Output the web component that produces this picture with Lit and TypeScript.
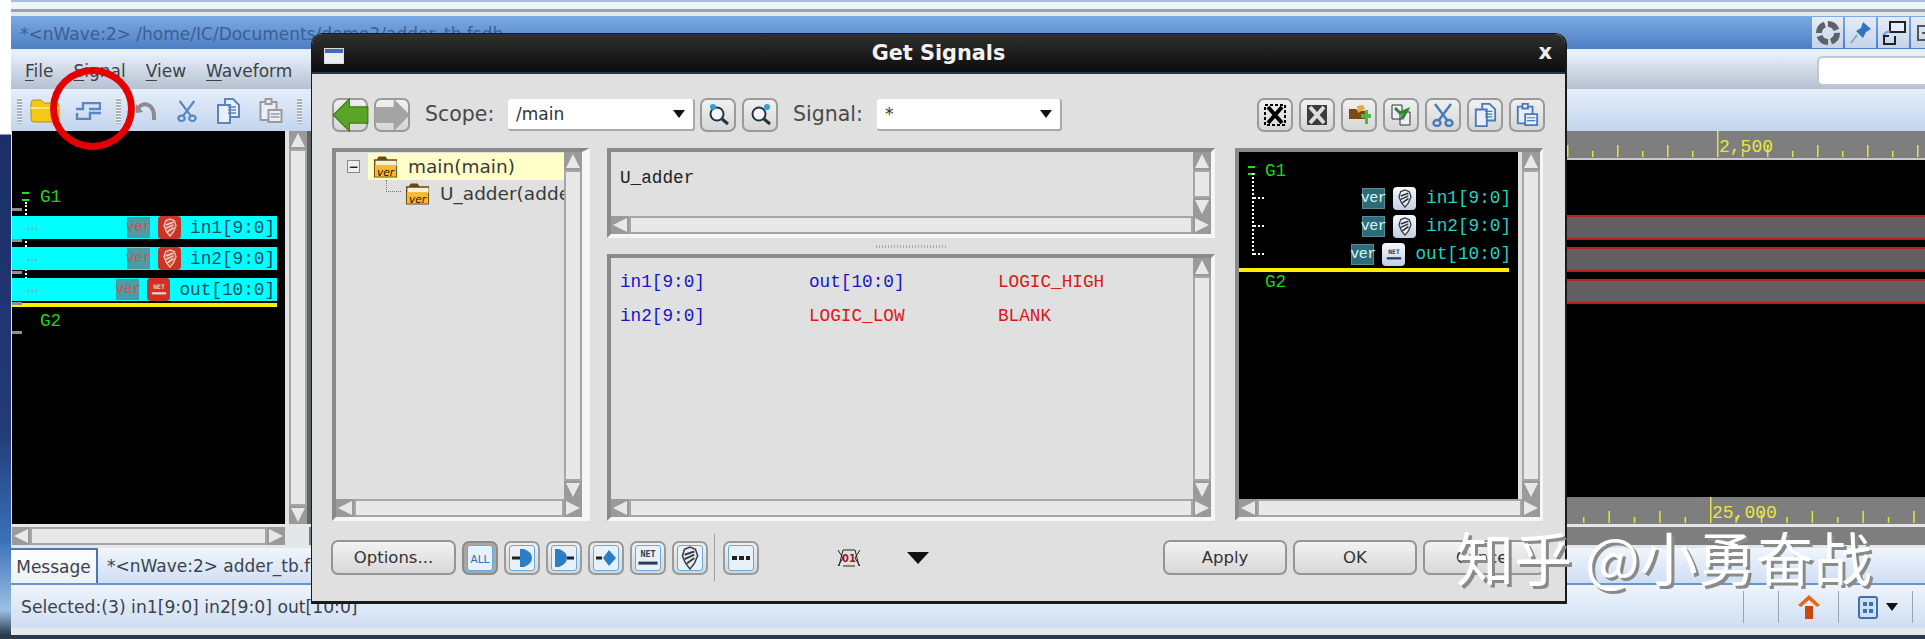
import { LitElement, html, css, svg } from "lit";
import { customElement } from "lit/decorators.js";

const vArrow = (up: boolean) => html`<svg class="arr" viewBox="0 0 18 18">
  <rect width="18" height="18" fill="#9a9a9a"/>
  <path d=${up ? "M9 2 16 16H2z" : "M9 16 16 2H2z"} fill="#e8e8e8"/></svg>`;
const hArrow = (left: boolean) => html`<svg class="arr" viewBox="0 0 18 18">
  <rect width="18" height="18" fill="#9a9a9a"/>
  <path d=${left ? "M2 9 16 2V16z" : "M16 9 2 2V16z"} fill="#e8e8e8"/></svg>`;
const vscroll = () => html`<div class="vscroll">${vArrow(true)}<div class="thumb"></div>${vArrow(false)}</div>`;
const hscroll = () => html`<div class="hscroll">${hArrow(true)}<div class="thumb"></div>${hArrow(false)}</div>`;

const folder = () => html`<svg class="folder" viewBox="0 0 26 24">
  <path d="M1 4h3l2-3h7l2 3h10v19H1z" fill="#6a4a10"/>
  <path d="M2.500 5.500h22V11h-22z" fill="#f6f0dc"/>
  <path d="M2 10h22v12H2z" fill="#f8b830"/>
  <text x="13" y="21" font-size="11" font-style="italic" text-anchor="middle" font-family="DejaVu Sans" fill="#1c1200">ver</text></svg>`;

const hatch = (c: string, o: string) => html`<svg viewBox="0 0 18 22" class="hatch">
  <path d="M4 3 9 1l5 2 2 6-3 7-4 5-4-5-3-7z" fill="${c}" stroke="${o}" stroke-width="1.400"/>
  <path d="M4 8l9-3M4 12l9-4M6 16l7-5" stroke="${o}" stroke-width="1.800" fill="none"/></svg>`;

const netIcon = (c: string) => html`<svg viewBox="0 0 20 20" class="hatch">
  <text x="10" y="9" font-size="7" font-weight="700" text-anchor="middle" font-family="DejaVu Sans Mono" fill="${c}">NET</text>
  <rect x="2" y="13" width="16" height="2.500" fill="${c}"/></svg>`;

const wrapIcon = (content: unknown, on = false) => html`<button class="ib ${on ? "on" : ""}"><span class="inner">${content}</span></button>`;

const scissors = (c: string) => html`<svg viewBox="0 0 22 24"><g fill="none" stroke="${c}" stroke-width="2.400">
  <path d="M3 1 15 17M19 1 7 17"/><ellipse cx="5" cy="20" rx="3.500" ry="3"/><ellipse cx="17" cy="20" rx="3.500" ry="3"/></g></svg>`;
const copyIco = (c: string) => html`<svg viewBox="0 0 24 26"><g stroke="${c}" stroke-width="2" fill="#e8eff8">
  <path d="M9 1h8l6 6v12H9z"/><path d="M2 7h12v18H2z"/></g>
  <path d="M12 9h8M12 12h8M12 15h8" stroke="${c}" stroke-width="1.300"/></svg>`;
const pasteIco = (c: string) => html`<svg viewBox="0 0 24 26"><g stroke="${c}" stroke-width="2" fill="#e8eff8">
  <path d="M2 4h16v18H2z"/><path d="M7 1h6v5H7z"/><path d="M10 12h13v12H10z"/></g>
  <path d="M12 16h9M12 19h9" stroke="${c}" stroke-width="1.300"/></svg>`;
const grid = (c: string) => html`<svg viewBox="0 0 20 26"><rect x="1" y="3" width="18" height="21" rx="2" fill="#cfe0f6" stroke="${c}" stroke-width="2"/>
  <path d="M5 8h4v4H5zM11 8h4v4h-4zM5 15h4v4H5zM11 15h4v4h-4z" fill="${c}"/></svg>`;
const lens = (dotX: number) => html`<svg viewBox="0 0 24 24"><circle cx="11" cy="11" r="6.500" fill="#f4f8fc" stroke="#24343f" stroke-width="2"/>
  <path d="M16 16l6 5" stroke="#24343f" stroke-width="3"/><circle cx="${dotX}" cy="4" r="3" fill="#2f9fd8"/></svg>`;

interface Sig { name: string; net?: boolean }
const sigs: Sig[] = [{ name: "in1[9:0]" }, { name: "in2[9:0]" }, { name: "out[10:0]", net: true }];

const tree = (cls: string) => html`<div class="sigtree ${cls}">
  <div class="vdots"></div>
  <div class="grp"><span class="gmark"></span><span>G1</span></div>
  ${sigs.map(s => html`<div class="sig">
    <span class="dots"></span>
    <span class="ver">ver</span>
    <span class="sicon">${s.net ? netIcon(cls === "sel" ? "#f4d0c8" : "#2a3a58") : hatch(cls === "sel" ? "#d05040" : "#e8eef4", cls === "sel" ? "#f0d0c0" : "#30343a")}</span>
    <span class="sname">${s.name}</span></div>`)}
  <div class="yl"></div>
  <div class="grp"><span class="gmark none"></span><span>G2</span></div>
  ${cls === "sel" ? html`${[209, 240, 272, 303, 332].map(y => html`<i class="gtick" style="top:${y - 132}px"></i>`)}` : ""}
</div>`;

const ruler = (step: number, tallAt: number, label: string, lx: number) => {
  const ticks: unknown[] = [];
  for (let i = -8; i < 10; i++) {
    const x = tallAt + i * step - 310;
    const h = i === 0 ? 26 : Math.abs(i) % 2 === 1 ? 6 : 12;
    ticks.push(svg`<rect x="${x}" y="${26 - h}" width="1.500" height="${h}" fill="#e4e43c"/>`);
  }
  return html`<svg class="ruler" viewBox="0 0 1615 27" width="1615" height="27">${ticks}
    <text x="${lx - 310}" y="21" font-family="Liberation Mono" font-size="18" fill="#e8e83c">${label}</text></svg>`;
};

@customElement("app-root")
export class AppRoot extends LitElement {
  static styles = css`
    :host { display: block; width: 1925px; height: 639px; overflow: hidden; font-family: "DejaVu Sans", sans-serif; }
    svg { display: block; }
    .desk { position: relative; width: 1925px; height: 639px; overflow: hidden; padding-left: 11px; box-sizing: border-box;
      background: linear-gradient(#fff 0, #fff 134px, #1c2f68 135px, #223a78 430px, #3b70b8 540px, #9cc0e4 610px, #2a3a4a 635px); }
    .main { width: 1914px; height: 635px; display: flex; flex-direction: column; background: #e8eff9; overflow: hidden; }
    .strip { height: 16px; flex: none; box-sizing: border-box; background: linear-gradient(#a8bedc 0 2px, #edf4fc 2px 9px, #9ca2aa 9px 12px, #e2e8ee 12px); }
    .title { height: 33px; flex: none; display: flex; align-items: center; background: linear-gradient(#7babe4, #4d7ec2); color: #3c5f90; font-size: 17px; padding-left: 9px; }
    .title .ttext { padding-top: 2px; }
    .title .sp { flex: 1; }
    .wb { width: 31px; height: 31px; margin-right: 2px; background: linear-gradient(#e4edf8, #c4d4e8); display: flex; align-items: center; justify-content: center; flex: none; }
    .wb:last-child { margin-right: -17px; }
    .wb svg { width: 26px; height: 26px; }
    .menu { height: 37px; flex: none; margin-top: 3px; display: flex; align-items: center; gap: 20px; padding-left: 14px; color: #3c424c; font-size: 17px; background: linear-gradient(#eaf1fb, #b4c1d1); }
    .menu u { text-underline-offset: 3px; }
    .menu .inp { margin-left: auto; width: 120px; height: 30px; background: #fff; border: 2px solid #c4c8cc; border-right: 0; border-radius: 6px 0 0 6px; box-sizing: border-box; margin-right: -12px; }
    .tools { height: 41px; flex: none; margin-top: 1px; display: flex; align-items: center; padding-left: 6px; background: linear-gradient(#e4edf9, #c4d5ee); }
    .grip { width: 5px; height: 26px; background: repeating-linear-gradient(#f8f8f8 0 1px, #a8b0bc 1px 3px); flex: none; }
    .tools svg { flex: none; }
    .m8 { margin-left: 8px; } .m14 { margin-left: 14px; } .m15 { margin-left: 15px; } .m18 { margin-left: 18px; } .m19 { margin-left: 19px; } .m21 { margin-left: 21px; }
    .body { height: 393px; flex: none; display: flex; background: #e0e2e6; }
    .sigpane { width: 273px; margin-left: 1px; background: #000; flex: none; position: relative; }
    .body > .vscroll { margin-left: 4px; }
    .gapd { width: 4px; flex: none; background: #60646a; }
    .wave { flex: 1; display: flex; flex-direction: column; background: #000; min-width: 0; }
    .ruler { flex: none; background: #7e7e7e; }
    .rtop { border-bottom: 2px solid #c8c8c8; }
    .wblack { flex: 1; display: flex; flex-direction: column; gap: 7px; padding-top: 55px; }
    .bar { height: 21px; background: #606060; border-top: 2px solid #b82020; border-bottom: 2px solid #b82020; }
    .under { height: 24px; display: flex; background: #e4e6ea; flex: none; }
    .under .hscroll { width: 273px; margin: 3px 0 0 1px; height: 18px; flex: none; }
    .under .gband { flex: 1; margin: 3px 0 3px 24px; background: #7e7e7e; }
    .tabs { height: 37px; flex: none; display: flex; align-items: stretch; font-size: 17px; color: #3c424c; border-bottom: 2px solid #6a94cc; box-sizing: border-box; background: linear-gradient(#f0f5fc, #cfdff4); }
    .tab1 { width: 87px; display: flex; align-items: center; justify-content: center; background: linear-gradient(#fff, #eaf1fa); border-right: 2px solid #4a78b4; border-top: 2px solid #4a78b4; box-sizing: border-box; }
    .tab2 { padding-left: 9px; display: flex; align-items: center; }
    .status { height: 43px; flex: none; display: flex; align-items: center; font-size: 17.200px; color: #3c424c; padding-left: 10px; background: linear-gradient(#eef4fc, #cfdef3); }
    .status .sp { flex: 1; }
    .div { width: 1px; height: 32px; background: #9aa4b0; flex: none; }
    .d34 { margin-left: 34px; }
    .d17 { margin-left: 17px; }
    .d14 { margin-left: 14px; }
    .home { margin-left: 18px; }
    .gridi { margin-left: 19px; }
    .tri8 { margin-left: 8px; }
    .stail { width: 12px; flex: none; }
    .status svg { flex: none; }
    .foot { flex: 1; background: #e6e8ea; }

    .vscroll { width: 18px; display: flex; flex-direction: column; flex: none; background: #dcdcdc; }
    .hscroll { height: 18px; display: flex; flex: none; background: #dcdcdc; }
    .arr { width: 18px; height: 18px; flex: none; }
    .thumb { flex: 1; background: #e8e8e8; border: 2px solid #a6a6a6; box-sizing: border-box; }

    .sigtree { font-family: "Liberation Mono", monospace; font-size: 17.700px; position: relative; display: flex; flex-direction: column; }
    .grp { display: flex; align-items: center; color: #1ed21e; height: 23px; }
    .gmark { width: 7px; height: 5px; border-top: 2px solid #22e022; border-bottom: 2px solid #22e022; flex: none; margin-right: 11px; }
    .gmark.none { visibility: hidden; }
    .sig { display: flex; align-items: center; justify-content: flex-end; position: relative; }
    .ver { font-size: 15px; letter-spacing: -0.5px; width: 23px; height: 21px; display: flex; align-items: center; justify-content: center; box-sizing: border-box; flex: none; }
    .sicon { width: 23px; height: 23px; border-radius: 4px; margin-left: 8px; margin-right: 9px; display: flex; align-items: center; justify-content: center; flex: none; }
    .hatch { width: 18px; height: 19px; }
    .dots { position: absolute; width: 10px; height: 0; border-top: 2px dotted; }
    .vdots { position: absolute; width: 0; border-left: 2px dotted #fff; }
    .yl { background: #ffee00; }
    .gtick { position: absolute; left: 0; width: 10px; height: 3px; background: #909090; }

    .sel { padding-top: 54px; }
    .sel .grp { padding-left: 10px; }
    .sel .sig { height: 23px; margin-top: 8px; background: #00ffff; color: #07505e; padding-right: 2px; margin-right: 8px; }
    .sel .ver { background: #4c9ca4; color: #c05a5a; }
    .sel .sicon { background: #cc3228; }
    .sel .dots { left: 15px; top: 12px; color: #7fa8b0; }
    .sel .vdots { left: 13px; top: 71px; height: 89px; }
    .sel .yl { height: 4px; margin: 2px 8px 0 0; }
    .sel .yl + .grp { margin-top: 2px; }

    .nor { padding-top: 8px; }
    .nor .grp { padding-left: 9px; height: 21px; }
    .nor .gmark { margin-right: 10px; }
    .nor .sig { height: 28px; color: #1fd2c2; padding-right: 7px; margin-top: 0; }
    .nor .sicon { margin-right: 10px; background: linear-gradient(#f6f8fc, #c0d0e4); }
    .nor .grp + .sig { margin-top: 3px; }
    .nor .ver { background: #2c6c78; color: #d8f4f4; border: 1px solid #5a8a90; }
    .nor .dots { left: 15px; top: 13px; color: #fff; }
    .nor .vdots { left: 13px; top: 21px; height: 82px; }
    .nor .yl { height: 4px; margin: 0 9px 0 0; }
    .nor .yl + .grp { margin-top: -1px; }

    .dialog { position: absolute; left: 311px; top: 33px; width: 1256px; height: 571px; box-sizing: border-box; background: #e0e0e0; border: 1px solid #1a1a1a; border-right-width: 2px; border-bottom-width: 3px; border-radius: 12px 12px 0 0; display: flex; flex-direction: column; }
    .dt { height: 40px; flex: none; position: relative; border-radius: 11px 11px 0 0; background: linear-gradient(#303030, #0c0c0c); border-bottom: 2px solid #24344c; box-sizing: border-box; display: flex; align-items: center; justify-content: center; color: #f2f2f2; font-weight: 700; font-size: 20.800px; }
    .dicon { position: absolute; left: 12px; top: 14px; width: 20px; height: 16px; background: linear-gradient(#3a6cc0 0 4px, #eaeef4 4px); border: 1px solid #d8dce4; box-sizing: border-box; }
    .dx { position: absolute; right: 13px; top: 6px; font-size: 21px; font-weight: 700; color: #eee; }
    .dbody { flex: 1; padding: 24px 20px 0; display: flex; flex-direction: column; }
    .drow { height: 34px; display: flex; align-items: center; flex: none; font-size: 20.500px; color: #4a4a4a; }
    .lbl { padding-bottom: 3px; box-sizing: border-box; }
    .lscope { width: 83px; }
    .lsig { width: 84px; }
    .s5 { width: 5px; flex: none; } .s6 { width: 6px; flex: none; } .s15 { width: 15px; flex: none; }
    .ib { width: 36px; height: 34px; padding: 0; flex: none; display: flex; align-items: center; justify-content: center; border: 2px solid #9a9a9a; border-radius: 7px; background: linear-gradient(#f0f0f0, #d6d6d6); box-sizing: border-box; }
    .ib.on { background: #a8a8a8; border-color: #8c8c8c; }
    .ib .inner { width: 26px; height: 26px; display: flex; align-items: center; justify-content: center; }
    .ib svg { width: 24px; height: 24px; flex: none; }
    .ib svg.big { width: 37px; height: 36px; }
    .frameb .ib .inner { border: 1px solid #6aa8d8; border-radius: 3px; background: #e8f0f8; box-sizing: border-box; }
    .combo { height: 32px; background: #fff; border-radius: 3px; box-sizing: border-box; display: flex; align-items: center; justify-content: space-between; padding: 0 8px; font-size: 17px; color: #333; position: relative; border-right: 2px solid #a8a8a8; border-bottom: 2px solid #a8a8a8; }
    .c187 { width: 187px; }
    .c185 { width: 185px; }
    .tri { width: 0; height: 0; border-left: 6px solid transparent; border-right: 6px solid transparent; border-top: 8px solid #111; flex: none; }
    .panes { display: grid; grid-template-columns: 258px 608px 311px; column-gap: 17px; height: 373px; margin-top: 16px; flex: none; }
    .frame { border: 4px solid #8a8a8a; border-right-color: #f6f6f6; border-bottom-color: #f6f6f6; box-sizing: border-box; display: flex; flex-direction: column; min-height: 0; }
    .ftree { border-right-width: 8px; }
    .fsig { margin-left: 3px; border-right-width: 3px; }
    .fsig .vscroll { margin-left: 4px; }
    .frow { flex: 1; display: flex; min-height: 0; }
    .fmain { flex: 1; min-width: 0; overflow: hidden; position: relative; }
    .tree { font-size: 18.500px; color: #3a3a3a; padding: 1px 0 0 32px; white-space: nowrap; }
    .tnode { display: flex; align-items: center; height: 27px; gap: 10px; position: relative; }
    .tnode.hl { background: #ffffc8; padding-left: 5px; }
    .tnode.ch { padding-left: 37px; }
    .folder { width: 25px; height: 24px; flex: none; }
    .exp { position: absolute; left: 11px; top: 8px; width: 13px; height: 13px; border: 1px solid #888; background: #eee; box-sizing: border-box; display: flex; align-items: center; justify-content: center; font: 700 12px/1 "DejaVu Sans"; color: #222; }
    .elbow { position: absolute; left: 50px; top: 28px; width: 14px; height: 11px; border-left: 1px dotted #777; border-bottom: 1px dotted #777; }
    .mid { display: flex; flex-direction: column; min-height: 0; }
    .mtop { height: 90px; flex: none; }
    .split { height: 16px; display: flex; align-items: center; justify-content: center; flex: none; }
    .split i { width: 70px; height: 3px; background: repeating-linear-gradient(90deg, #aaa 0 1px, transparent 1px 3px); }
    .mbot { flex: 1; }
    .mono { font-family: "Liberation Mono", monospace; font-size: 17.700px; }
    .inst { padding: 16px 0 0 9px; color: #222; }
    .list { display: grid; grid-template-columns: 189px 189px 189px; grid-auto-rows: 34px; padding: 14px 0 0 9px; color: #d81818; }
    .list .b { color: #1414c8; }
    .blk { flex: 1; background: #000; }
    .dbtm { height: 35px; margin-top: 19px; display: flex; align-items: center; flex: none; }
    .btn { height: 35px; box-sizing: border-box; border: 2px solid #959595; border-radius: 7px; background: linear-gradient(#f2f2f2, #d8d8d8); display: flex; align-items: center; justify-content: center; font-size: 16.500px; color: #333; flex: none; }
    .w125 { width: 125px; margin-left: -1px; }
    .w124 { width: 124px; margin-right: 6px; }
    .w122 { width: 122px; }
    .w6 { margin-left: 6px; }
    .vsep { width: 1px; height: 47px; background: #a0a0a0; margin: 0 8px 0 6px; flex: none; }
    .sp { flex: 1; }
    .zero { margin-left: 78px; flex: none; }
    .dialogtri { width: 0; height: 0; border-left: 11px solid transparent; border-right: 11px solid transparent; border-top: 12px solid #111; margin-left: 46px; flex: none; }

    .mark { position: absolute; left: 1456px; top: 518px; font-family: "Noto Sans CJK SC", sans-serif; font-size: 58px; font-weight: 400; color: #fff; white-space: pre; text-shadow: 3px 3px 0 #8a8a8a; line-height: 76px; }
    .circle { position: absolute; left: 50px; top: 67px; width: 85px; height: 83px; box-sizing: border-box; border: 7px solid #e40000; border-radius: 50%; }
  `;

  render() {
    const topRuler = ruler(25, 1716, "2,500", 1718);
    const botRuler = ruler(25.4, 1709, "25,000", 1711);
    return html`<div class="desk">
      <div class="main">
        <div class="strip"></div>
        <div class="title"><span class="ttext">*&lt;nWave:2&gt; /home/IC/Documents/demo2/adder_tb.fsdb</span><span class="sp"></span>
          <span class="wb"><svg viewBox="0 0 26 26"><circle cx="13" cy="13" r="9" fill="none" stroke="#5e6268" stroke-width="6" stroke-dasharray="11 3"/></svg></span>
          <span class="wb"><svg viewBox="0 0 26 26"><path d="M15 2l8 7-5 3-3 6-7-7 5-3z" fill="#2f74c0"/><path d="M9 15 3 23" stroke="#8aa" stroke-width="2"/></svg></span>
          <span class="wb"><svg viewBox="0 0 26 26"><rect x="9" y="2" width="15" height="10" fill="#e8eef6" stroke="#222" stroke-width="2"/><path d="M2 16q3-5 7-4" fill="none" stroke="#6aa0d8" stroke-width="2"/><path d="M14 16v8H3v-8h5" fill="none" stroke="#222" stroke-width="2"/></svg></span>
          <span class="wb"><svg viewBox="0 0 26 26"><rect x="4" y="6" width="16" height="14" fill="none" stroke="#555" stroke-width="2"/><path d="M8 13h8" stroke="#555" stroke-width="2"/></svg></span>
        </div>
        <div class="menu"><span><u>F</u>ile</span><span><u>S</u>ignal</span><span><u>V</u>iew</span><span><u>W</u>aveform</span><span class="inp"></span></div>
        <div class="tools">
          <span class="grip"></span>
          <svg class="m8" width="30" height="25" viewBox="0 0 30 25"><path d="M1 5q0-3 3-3h7l3 3h12q3 0 3 3v13q0 3-3 3H4q-3 0-3-3z" fill="#f4c818" stroke="#b89010"/><path d="M1 10h28" stroke="#ffe870" stroke-width="2"/></svg>
          <svg class="m15" width="26" height="18" viewBox="0 0 26 18" fill="none" stroke="#5a88bc" stroke-width="2.400"><path d="M1 7H8V1H25V7H14"/><path d="M2 11V17H15V11H26"/></svg>
          <span class="grip m15"></span>
          <svg class="m15" width="20" height="20" viewBox="0 0 20 20"><path d="M2 8C5 1 17 1 18 14V19" fill="none" stroke="#8c8c8c" stroke-width="4"/><path d="M0 3 7 11 0 12z" fill="#8c8c8c"/></svg>
          <svg class="m21" width="20" height="22" viewBox="0 0 20 22">${scissors("#5a86bc")}</svg>
          <svg class="m19" width="24" height="26" viewBox="0 0 24 26">${copyIco("#5a86bc")}</svg>
          <svg class="m18" width="25" height="26" viewBox="0 0 25 26">${pasteIco("#9a9a9a")}</svg>
          <span class="grip m14"></span>
        </div>
        <div class="body">
          <div class="sigpane">${tree("sel")}</div>
          ${vscroll()}
          <span class="gapd"></span>
          <div class="wave">
            <div class="rtop">${topRuler}</div>
            <div class="wblack"><div class="bar"></div><div class="bar"></div><div class="bar"></div></div>
            <div>${botRuler}</div>
          </div>
        </div>
        <div class="under">${hscroll()}<span class="gband"></span></div>
        <div class="tabs"><div class="tab1">Message</div><div class="tab2">*&lt;nWave:2&gt; adder_tb.fsdb</div></div>
        <div class="status"><span>Selected:(3) in1[9:0] in2[9:0] out[10:0]</span><span class="sp"></span>
          <span class="div"></span>
          <span class="div d34"></span>
          <svg class="home" width="24" height="26" viewBox="0 0 24 26"><path d="M12 1 23 11 20 13 12 6 4 13 1 11z" fill="#e06a20"/><rect x="8" y="12" width="8" height="13" fill="#c84810"/></svg>
          <span class="div d17"></span>
          <svg class="gridi" width="20" height="26" viewBox="0 0 20 26">${grid("#3f70b0")}</svg>
          <span class="tri tri8"></span>
          <span class="div d14"></span>
          <span class="stail"></span>
        </div>
        <div class="foot"></div>
      </div>

      <div class="dialog">
        <div class="dt"><span class="dicon"></span>Get Signals<span class="dx">x</span></div>
        <div class="dbody">
          <div class="drow">
            ${wrapIcon(html`<svg class="big" viewBox="0 0 32 30"><path d="M15 1v7h16v14H15v7L1 15z" fill="#5aa428" stroke="#3c7a18"/></svg>`)}
            <span class="s6"></span>
            ${wrapIcon(html`<svg class="big" viewBox="0 0 32 30"><path d="M17 1v7H1v14h16v7l14-14z" fill="#a4a4a4"/></svg>`)}
            <span class="s15"></span>
            <span class="lbl lscope">Scope:</span>
            <div class="combo c187"><span>/main</span><span class="tri"></span></div>
            <span class="s5"></span>
            ${wrapIcon(lens(7))}
            <span class="s6"></span>
            ${wrapIcon(lens(19))}
            <span class="s15"></span>
            <span class="lbl lsig">Signal:</span>
            <div class="combo c185"><span>*</span><span class="tri"></span></div>
            <span class="sp"></span>
            ${wrapIcon(html`<svg viewBox="0 0 24 24"><rect x="2" y="2" width="20" height="20" fill="none" stroke="#000" stroke-width="2" stroke-dasharray="3 2"/><path d="M5 4l14 16M19 4 5 20" stroke="#000" stroke-width="4"/></svg>`)}
            <span class="w6"></span>
            ${wrapIcon(html`<svg viewBox="0 0 24 24"><rect x="2" y="2" width="20" height="20" fill="#3c3c3c"/><path d="M5 4l14 16M19 4 5 20" stroke="#ddd" stroke-width="4"/></svg>`)}
            <span class="w6"></span>
            ${wrapIcon(html`<svg viewBox="0 0 24 24"><path d="M2 6h7l2 2h9v8H2z" fill="#7a4a10"/><path d="M10 3l6-1 2 4-7 4z" fill="#e8a840"/><path d="M14 11h4V7h3v4h3v4h-3v6h-3v-6h-4z" fill="#4cb848"/></svg>`)}
            <span class="w6"></span>
            ${wrapIcon(html`<svg viewBox="0 0 24 24"><path d="M3 2h10v14H3zM11 9h10v13H11z" fill="#eef" stroke="#333"/><path d="M6 5l5 5 7-3-5 9" fill="none" stroke="#2a8a2a" stroke-width="3"/></svg>`)}
            <span class="w6"></span>
            ${wrapIcon(scissors("#4a78b8"))}
            <span class="w6"></span>
            ${wrapIcon(copyIco("#4a78b8"))}
            <span class="w6"></span>
            ${wrapIcon(pasteIco("#4a78b8"))}
          </div>

          <div class="panes">
            <div class="frame ftree">
              <div class="frow">
                <div class="fmain">
                  <span class="exp">−</span><span class="elbow"></span>
                  <div class="tree">
                    <div class="tnode hl">${folder()}<span>main(main)</span></div>
                    <div class="tnode ch">${folder()}<span>U_adder(adder)</span></div>
                  </div>
                </div>
                ${vscroll()}
              </div>
              ${hscroll()}
            </div>

            <div class="mid">
              <div class="frame mtop">
                <div class="frow"><div class="fmain mono inst">U_adder</div>${vscroll()}</div>
                ${hscroll()}
              </div>
              <div class="split"><i></i></div>
              <div class="frame mbot">
                <div class="frow">
                  <div class="fmain mono list">
                    <span class="b">in1[9:0]</span><span class="b">out[10:0]</span><span>LOGIC_HIGH</span>
                    <span class="b">in2[9:0]</span><span>LOGIC_LOW</span><span>BLANK</span>
                  </div>${vscroll()}
                </div>
                ${hscroll()}
              </div>
            </div>

            <div class="frame fsig">
              <div class="frow"><div class="fmain blk">${tree("nor")}</div>${vscroll()}</div>
              ${hscroll()}
            </div>
          </div>

          <div class="dbtm frameb">
            <div class="btn w125">Options...</div>
            <span class="w6"></span>
            ${wrapIcon(html`<svg viewBox="0 0 24 24"><text x="12" y="17" font-size="10.500" text-anchor="middle" font-family="DejaVu Sans" fill="#2a70b8">ALL</text></svg>`, true)}
            <span class="w6"></span>
            ${wrapIcon(html`<svg viewBox="0 0 24 24"><path d="M2 12h8" stroke="#222" stroke-width="3"/><path d="M10 3h4q8 3 8 9t-8 9h-4z" fill="#2a7ec8"/></svg>`)}
            <span class="w6"></span>
            ${wrapIcon(html`<svg viewBox="0 0 24 24"><path d="M3 3h4q8 3 8 9t-8 9H3z" fill="#2a7ec8"/><path d="M15 12h7" stroke="#222" stroke-width="3"/></svg>`)}
            <span class="w6"></span>
            ${wrapIcon(html`<svg viewBox="0 0 24 24"><path d="M2 12h6" stroke="#222" stroke-width="3"/><path d="M15 4l7 8-7 8-6-8z" fill="#2a7ec8"/></svg>`)}
            <span class="w6"></span>
            ${wrapIcon(netIcon("#2a3a58"))}
            <span class="w6"></span>
            ${wrapIcon(hatch("#e8eef4", "#3a3e44"))}
            <span class="vsep"></span>
            ${wrapIcon(html`<svg viewBox="0 0 24 24"><path d="M3 10h5v4H3zM10 10h5v4h-5zM17 10h4v4h-4z" fill="#222"/></svg>`)}
            <svg class="zero" width="24" height="20" viewBox="0 0 24 20" fill="none" stroke="#222"><path d="M1 2l5 8-5 8M23 2l-5 8 5 8M6 2l-4 16M18 2l4 16M6 2h12M6 18h12"/><text x="12" y="14" font-size="10" font-weight="700" text-anchor="middle" font-family="DejaVu Sans" fill="#a01818" stroke="none">01</text></svg>
            <span class="dialogtri"></span>
            <span class="sp"></span>
            <div class="btn w124">Apply</div>
            <div class="btn w124">OK</div>
            <div class="btn w122">Cancel</div>
          </div>
        </div>
      </div>

      <div class="mark">知乎 @小勇奋战</div>
      <div class="circle"></div>
    </div>`;
  }
}
